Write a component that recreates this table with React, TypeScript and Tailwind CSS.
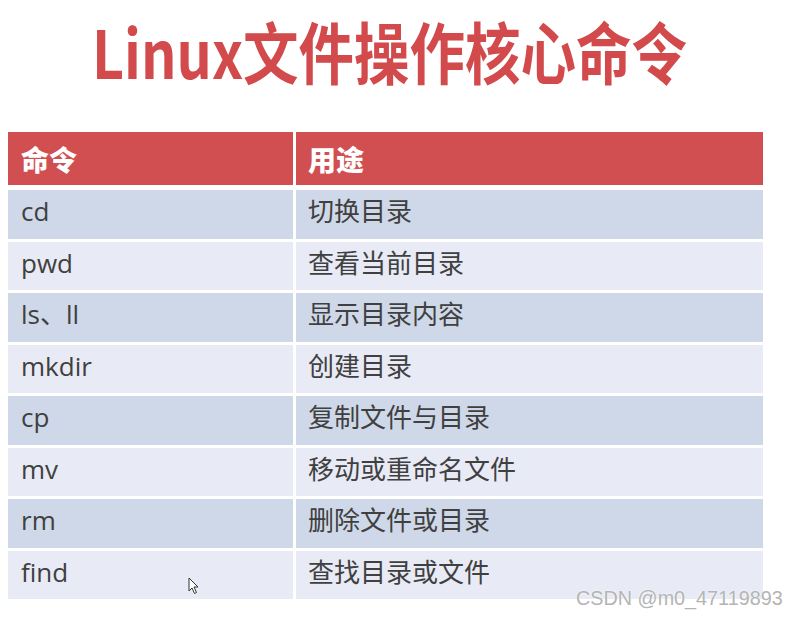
import React from "react";

const rows: [string, string][] = [
  ["cd", "切换目录"],
  ["pwd", "查看当前目录"],
  ["ls、ll", "显示目录内容"],
  ["mkdir", "创建目录"],
  ["cp", "复制文件与目录"],
  ["mv", "移动或重命名文件"],
  ["rm", "删除文件或目录"],
  ["find", "查找目录或文件"],
];

const font = "font-['Open_Sans','Noto_Sans_CJK_SC',sans-serif]";

export default function App() {
  return (
    <div className="relative w-[796px] h-[617px] bg-white overflow-hidden">
      <div className="h-[132px] pt-[22px] pl-[92px]">
        <div className="font-['Noto_Sans_CJK_SC',sans-serif] font-bold text-[55.5px] leading-[56px] text-[#d24a4b] scale-y-[1.2] whitespace-nowrap">
          Linux文件操作核心命令
        </div>
      </div>
      <div className={`ml-[8px] w-[755px] flex flex-col ${font}`}>
        <div className="flex gap-[3px] h-[53px] mb-[5px]">
          <div className="w-[285px] bg-[#d14f51] flex items-center pl-[13px] text-white font-black text-[28px] font-['Noto_Sans_CJK_SC',sans-serif]">
            命令
          </div>
          <div className="flex-1 bg-[#d14f51] flex items-center pl-[12px] text-white font-black text-[28px] font-['Noto_Sans_CJK_SC',sans-serif]">
            用途
          </div>
        </div>
        <div className="flex flex-col gap-[3px]">
          {rows.map(([cmd, use], i) => {
            const bg = i % 2 === 0 ? "bg-[#cfd8e8]" : "bg-[#e8ebf5]";
            return (
              <div key={cmd} className="flex gap-[3px] h-[48.5px]">
                <div className={`w-[285px] ${bg} flex items-center pl-[13px] pb-[5px] text-[26px] text-[#404040]`}>
                  {cmd}
                </div>
                <div className={`flex-1 ${bg} flex items-center pl-[12px] pb-[5px] text-[26px] text-[#404040]`}>
                  {use}
                </div>
              </div>
            );
          })}
        </div>
      </div>
      <div className="absolute left-[576px] top-[587px] text-[19.8px] leading-[22px] text-[#b4b4b4] font-['Liberation_Sans',sans-serif] [text-shadow:0_0_2px_#ffffff]">
        CSDN @m0_47119893
      </div>
      <svg className="absolute left-[188px] top-[577px]" width="12" height="18" viewBox="0 0 12 18">
        <path d="M1 1 L1 14 L4 11 L6.5 16.5 L8.5 15.5 L6 10 L10 10 Z" fill="#ffffff" stroke="#333333" strokeWidth="1" strokeLinejoin="round" />
      </svg>
    </div>
  );
}
